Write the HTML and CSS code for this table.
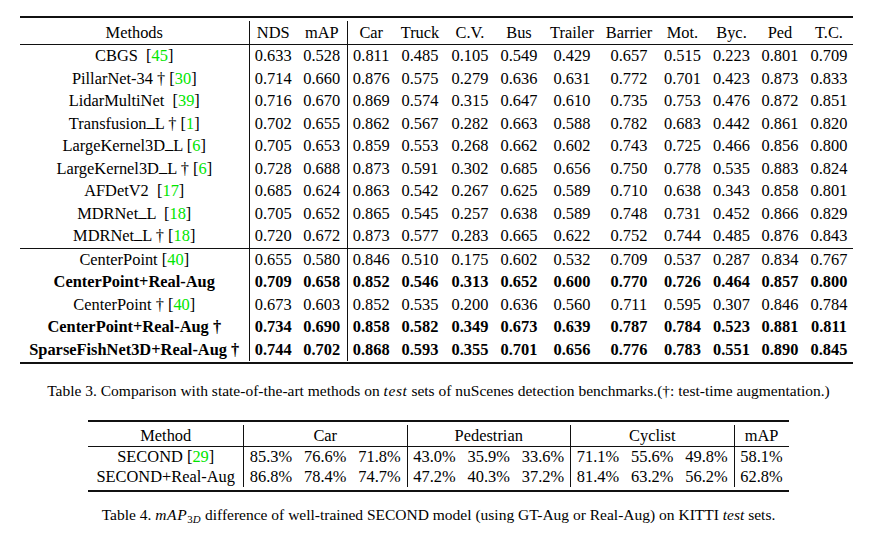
FILE: index.html
```html
<!DOCTYPE html>
<html lang="en">
<head>
<meta charset="utf-8">
<title>Tables</title>
<link rel="stylesheet" href="styles.css">
</head>
<body>
<div class="page">
  <div class="rules rules-t1">
    <table class="t1">
      <colgroup>
        <col class="w-m"><col class="w48"><col class="w50"><col class="w48"><col class="w50"><col class="w50"><col class="w48"><col class="w58"><col class="w56"><col class="w51"><col class="w47"><col class="w50"><col class="w48">
      </colgroup>
      <thead>
        <tr><th class="vr">Methods</th><th>NDS</th><th class="vr">mAP</th><th>Car</th><th>Truck</th><th>C.V.</th><th>Bus</th><th>Trailer</th><th>Barrier</th><th>Mot.</th><th>Byc.</th><th>Ped</th><th>T.C.</th></tr>
      </thead>
      <tbody>
        <tr><td class="vr">CBGS &nbsp;[<span class="ref">45</span>]</td><td>0.633</td><td class="vr">0.528</td><td>0.811</td><td>0.485</td><td>0.105</td><td>0.549</td><td>0.429</td><td>0.657</td><td>0.515</td><td>0.223</td><td>0.801</td><td>0.709</td></tr>
        <tr><td class="vr">PillarNet-34 † [<span class="ref">30</span>]</td><td>0.714</td><td class="vr">0.660</td><td>0.876</td><td>0.575</td><td>0.279</td><td>0.636</td><td>0.631</td><td>0.772</td><td>0.701</td><td>0.423</td><td>0.873</td><td>0.833</td></tr>
        <tr><td class="vr">LidarMultiNet &nbsp;[<span class="ref">39</span>]</td><td>0.716</td><td class="vr">0.670</td><td>0.869</td><td>0.574</td><td>0.315</td><td>0.647</td><td>0.610</td><td>0.735</td><td>0.753</td><td>0.476</td><td>0.872</td><td>0.851</td></tr>
        <tr><td class="vr">Transfusion<span class="us">_</span>L † [<span class="ref">1</span>]</td><td>0.702</td><td class="vr">0.655</td><td>0.862</td><td>0.567</td><td>0.282</td><td>0.663</td><td>0.588</td><td>0.782</td><td>0.683</td><td>0.442</td><td>0.861</td><td>0.820</td></tr>
        <tr><td class="vr">LargeKernel3D<span class="us">_</span>L [<span class="ref">6</span>]</td><td>0.705</td><td class="vr">0.653</td><td>0.859</td><td>0.553</td><td>0.268</td><td>0.662</td><td>0.602</td><td>0.743</td><td>0.725</td><td>0.466</td><td>0.856</td><td>0.800</td></tr>
        <tr><td class="vr">LargeKernel3D<span class="us">_</span>L † [<span class="ref">6</span>]</td><td>0.728</td><td class="vr">0.688</td><td>0.873</td><td>0.591</td><td>0.302</td><td>0.685</td><td>0.656</td><td>0.750</td><td>0.778</td><td>0.535</td><td>0.883</td><td>0.824</td></tr>
        <tr><td class="vr">AFDetV2 &nbsp;[<span class="ref">17</span>]</td><td>0.685</td><td class="vr">0.624</td><td>0.863</td><td>0.542</td><td>0.267</td><td>0.625</td><td>0.589</td><td>0.710</td><td>0.638</td><td>0.343</td><td>0.858</td><td>0.801</td></tr>
        <tr><td class="vr">MDRNet<span class="us">_</span>L &nbsp;[<span class="ref">18</span>]</td><td>0.705</td><td class="vr">0.652</td><td>0.865</td><td>0.545</td><td>0.257</td><td>0.638</td><td>0.589</td><td>0.748</td><td>0.731</td><td>0.452</td><td>0.866</td><td>0.829</td></tr>
        <tr><td class="vr">MDRNet<span class="us">_</span>L † [<span class="ref">18</span>]</td><td>0.720</td><td class="vr">0.672</td><td>0.873</td><td>0.577</td><td>0.283</td><td>0.665</td><td>0.622</td><td>0.752</td><td>0.744</td><td>0.485</td><td>0.876</td><td>0.843</td></tr>
      </tbody>
      <tbody class="mid">
        <tr><td class="vr">CenterPoint [<span class="ref">40</span>]</td><td>0.655</td><td class="vr">0.580</td><td>0.846</td><td>0.510</td><td>0.175</td><td>0.602</td><td>0.532</td><td>0.709</td><td>0.537</td><td>0.287</td><td>0.834</td><td>0.767</td></tr>
        <tr class="b"><td class="vr">CenterPoint+Real-Aug</td><td>0.709</td><td class="vr">0.658</td><td>0.852</td><td>0.546</td><td>0.313</td><td>0.652</td><td>0.600</td><td>0.770</td><td>0.726</td><td>0.464</td><td>0.857</td><td>0.800</td></tr>
        <tr><td class="vr">CenterPoint † [<span class="ref">40</span>]</td><td>0.673</td><td class="vr">0.603</td><td>0.852</td><td>0.535</td><td>0.200</td><td>0.636</td><td>0.560</td><td>0.711</td><td>0.595</td><td>0.307</td><td>0.846</td><td>0.784</td></tr>
        <tr class="b"><td class="vr">CenterPoint+Real-Aug †</td><td>0.734</td><td class="vr">0.690</td><td>0.858</td><td>0.582</td><td>0.349</td><td>0.673</td><td>0.639</td><td>0.787</td><td>0.784</td><td>0.523</td><td>0.881</td><td>0.811</td></tr>
        <tr class="b"><td class="vr">SparseFishNet3D+Real-Aug †</td><td>0.744</td><td class="vr">0.702</td><td>0.868</td><td>0.593</td><td>0.355</td><td>0.701</td><td>0.656</td><td>0.776</td><td>0.783</td><td>0.551</td><td>0.890</td><td>0.845</td></tr>
      </tbody>
    </table>
  </div>
  <p class="cap cap1">Table 3. Comparison with state-of-the-art methods on <i class="math">test</i> sets of nuScenes detection benchmarks.(†: test-time augmentation.)</p>

  <div class="rules rules-t2">
    <table class="t2">
      <colgroup>
        <col class="w-m2"><col class="wv"><col class="wv"><col class="wv"><col class="wv"><col class="wv"><col class="wv"><col class="wv"><col class="wv"><col class="wv"><col class="wv">
      </colgroup>
      <thead>
        <tr><th class="vr">Method</th><th colspan="3" class="vr">Car</th><th colspan="3" class="vr">Pedestrian</th><th colspan="3" class="vr">Cyclist</th><th>mAP</th></tr>
      </thead>
      <tbody>
        <tr><td class="vr">SECOND [<span class="ref">29</span>]</td><td>85.3%</td><td>76.6%</td><td class="vr">71.8%</td><td>43.0%</td><td>35.9%</td><td class="vr">33.6%</td><td>71.1%</td><td>55.6%</td><td class="vr">49.8%</td><td>58.1%</td></tr>
        <tr><td class="vr">SECOND+Real-Aug</td><td>86.8%</td><td>78.4%</td><td class="vr">74.7%</td><td>47.2%</td><td>40.3%</td><td class="vr">37.2%</td><td>81.4%</td><td>63.2%</td><td class="vr">56.2%</td><td>62.8%</td></tr>
      </tbody>
    </table>
  </div>
  <p class="cap cap2">Table 4. <i class="math">mAP</i><sub class="sub">3<i class="math">D</i></sub> difference of well-trained SECOND model (using GT-Aug or Real-Aug) on KITTI <i>test</i> sets.</p>
</div>
</body>
</html>
```

FILE: styles.css
```css
html, body {
  margin: 0;
  padding: 0;
  background: #ffffff;
}

body {
  width: 877px;
  height: 536px;
  overflow: hidden;
  font-family: "Liberation Serif", "Times New Roman", serif;
  color: #000;
}

.page {
  padding-top: 16px;
  display: flex;
  flex-direction: column;
  align-items: center;
}

.rules {
  border-top: 2px solid #111;
  border-bottom: 2px solid #111;
}

.rules-t1 {
  padding: 2.5px 0 1px;
  margin-left: -4px;
}

.rules-t2 {
  padding: 3px 0 3px;
  margin-top: 20px;
}

table {
  border-collapse: collapse;
  table-layout: fixed;
  font-size: 16.4px;
}

th, td {
  padding: 0;
  text-align: center;
  font-weight: normal;
  white-space: nowrap;
}

.t1 { width: 833px; }
.t1 td { line-height: 22.5px; }
.t1 thead th {
  line-height: 23.5px;
  border-bottom: 1px solid #111;
}
.t1 tbody.mid tr:first-child td { border-top: 1px solid #111; }
.t1 tr.b td { font-weight: bold; }

.t2 { width: 700px; }
.t2 td { line-height: 20px; }
.t2 thead th {
  line-height: 21px;
  border-bottom: 1px solid #111;
}

.vr { border-right: 1px solid #111; }

.w-m { width: 229px; }
.w47 { width: 47px; }
.w48 { width: 48px; }
.w50 { width: 50px; }
.w51 { width: 51px; }
.w56 { width: 56px; }
.w58 { width: 58px; }

.w-m2 { width: 155px; }
.wv { width: 54.5px; }

.ref { color: #00e600; }

.us {
  display: inline-block;
  line-height: 0;
  vertical-align: 0.1em;
}

.cap {
  margin: 0;
  font-size: 15.5px;
  line-height: 18px;
  white-space: nowrap;
}

.cap1 { margin-top: 18px; }
.cap2 { margin-top: 14px; }

.math {
  font-style: italic;
  letter-spacing: 0.6px;
}

.sub {
  font-size: 0.7em;
  line-height: 0;
  vertical-align: -0.25em;
}
```
